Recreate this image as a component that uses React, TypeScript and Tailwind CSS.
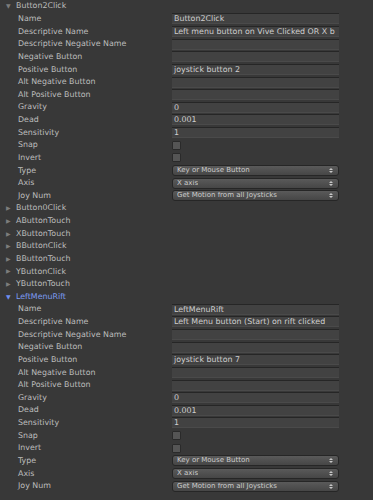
import React from 'react';

type Field =
  | { label: string; kind: 'text'; value: string }
  | { label: string; kind: 'check' }
  | { label: string; kind: 'popup'; value: string };

const axisFields = (name: string, desc: string, pos: string): Field[] => [
  { label: 'Name', kind: 'text', value: name },
  { label: 'Descriptive Name', kind: 'text', value: desc },
  { label: 'Descriptive Negative Name', kind: 'text', value: '' },
  { label: 'Negative Button', kind: 'text', value: '' },
  { label: 'Positive Button', kind: 'text', value: pos },
  { label: 'Alt Negative Button', kind: 'text', value: '' },
  { label: 'Alt Positive Button', kind: 'text', value: '' },
  { label: 'Gravity', kind: 'text', value: '0' },
  { label: 'Dead', kind: 'text', value: '0.001' },
  { label: 'Sensitivity', kind: 'text', value: '1' },
  { label: 'Snap', kind: 'check' },
  { label: 'Invert', kind: 'check' },
  { label: 'Type', kind: 'popup', value: 'Key or Mouse Button' },
  { label: 'Axis', kind: 'popup', value: 'X axis' },
  { label: 'Joy Num', kind: 'popup', value: 'Get Motion from all Joysticks' },
];

const collapsed = [
  'Button0Click',
  'AButtonTouch',
  'XButtonTouch',
  'BButtonClick',
  'BButtonTouch',
  'YButtonClick',
  'YButtonTouch',
];

const Foldout = ({ label, open, active }: { label: string; open: boolean; active?: boolean }) => (
  <div className="flex h-[12.63px] items-center pl-[6px]">
    <span
      className={`w-[10px] text-[6px] leading-none ${active ? 'text-[#6f8ff0]' : 'text-[#7c7c7c]'}`}
    >
      {open ? '▼' : '▶'}
    </span>
    <span className={active ? 'text-[#7d9cf4]' : 'text-[#bcbcbc]'}>{label}</span>
  </div>
);

const Value = ({ f }: { f: Field }) => {
  if (f.kind === 'text') {
    return (
      <div className="h-[11px] w-[167px] overflow-hidden whitespace-nowrap border-t border-t-[#262626] border-b border-b-[#4a4a4a] bg-[#424242] pl-[2px] leading-[9px] text-[#cfcfcf]">
        {f.value}
      </div>
    );
  }
  if (f.kind === 'check') {
    return <div className="h-[9px] w-[9px] rounded-[1px] border border-[#2a2a2a] bg-[#555555]" />;
  }
  return (
    <div className="flex h-[11px] w-[167px] items-center justify-between rounded-[3px] border border-[#262626] bg-gradient-to-b from-[#5a5a5a] to-[#464646] pl-[4px] pr-[5px] text-[7px] text-[#cccccc]">
      <span className="overflow-hidden whitespace-nowrap leading-none">{f.value}</span>
      <span className="flex flex-col items-center gap-[1px]">
        <span className="h-0 w-0 border-x-[2px] border-b-[2px] border-x-transparent border-b-[#c8c8c8]" />
        <span className="h-0 w-0 border-x-[2px] border-t-[2px] border-x-transparent border-t-[#c8c8c8]" />
      </span>
    </div>
  );
};

const FieldRow = ({ f }: { f: Field }) => (
  <div className="flex h-[12.63px] items-center">
    <span className="w-[172px] pl-[18px] text-[#bdbdbd]">{f.label}</span>
    <Value f={f} />
  </div>
);

export default function App() {
  return (
    <div
      className="h-[500px] w-[373px] overflow-hidden bg-[#383838] text-[7.9px]"
      style={{ fontFamily: '"DejaVu Sans", Verdana, sans-serif' }}
    >
      <Foldout label="Button2Click" open />
      {axisFields('Button2Click', 'Left menu button on Vive Clicked OR X b', 'joystick button 2').map(f => (
        <FieldRow key={f.label} f={f} />
      ))}
      {collapsed.map(c => (
        <Foldout key={c} label={c} open={false} />
      ))}
      <Foldout label="LeftMenuRift" open active />
      {axisFields('LeftMenuRift', 'Left Menu button (Start) on rift clicked', 'joystick button 7').map(f => (
        <FieldRow key={'r' + f.label} f={f} />
      ))}
    </div>
  );
}
